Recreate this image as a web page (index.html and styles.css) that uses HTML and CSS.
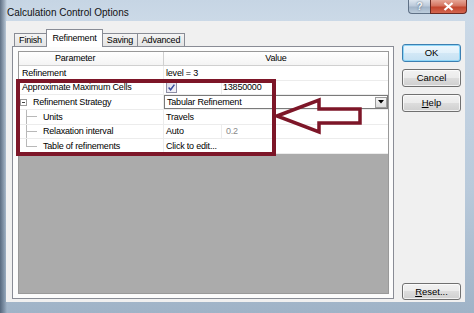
FILE: index.html
```
<!DOCTYPE html>
<html>
<head>
<meta charset="utf-8">
<title>Calculation Control Options</title>
<link rel="stylesheet" href="styles.css">
</head>
<body>
<div class="window">
  <div class="titlebar">
    <span class="title">Calculation Control Options</span>
    <div class="caps">
      <div class="cap cap-help">?</div>
      <div class="cap cap-close"><svg width="11" height="9" viewBox="0 0 11 9"><path d="M1.5 1 L9.5 8 M9.5 1 L1.5 8" stroke="#fff" stroke-width="2.2" fill="none"/></svg></div>
    </div>
  </div>
  <div class="client">
    <div class="main">
      <div class="tabs">
        <div class="tab t-finish">Finish</div>
        <div class="tab tab-sel t-ref">Refinement</div>
        <div class="tab t-sav">Saving</div>
        <div class="tab t-adv">Advanced</div>
      </div>
      <div class="panel">
        <div class="grid">
          <div class="ghead"><div class="hc1">Parameter</div><div class="hc2">Value</div></div>
          <div class="row"><div class="c1">Refinement</div><div class="c2">level = 3</div></div>
          <div class="row"><div class="c1">Approximate Maximum Cells</div><div class="c2 split"><div class="sub"><svg class="check" width="11" height="11" viewBox="0 0 11 11"><defs><linearGradient id="cb" x1="0" y1="0" x2="1" y2="1"><stop offset="0" stop-color="#d9d9e8"/><stop offset="1" stop-color="#f7f7fb"/></linearGradient></defs><rect x="0.5" y="0.5" width="10" height="10" fill="url(#cb)" stroke="#8e8fa6"/><path d="M2.6 5.6 L4.6 7.8 L8.4 2.6" stroke="#3a4d9e" stroke-width="1.5" fill="none"/></svg></div><div class="sub2">13850000</div></div></div>
          <div class="row"><div class="c1 lvl1"><span class="minus"></span>Refinement Strategy</div><div class="c2 combo-cell"><div class="combo"><span class="combo-text">Tabular Refinement</span><span class="drop"><svg width="6" height="4" viewBox="0 0 6 4"><path d="M0 0 H6 L3 3.5 Z" fill="#000"/></svg></span></div></div></div>
          <div class="row"><div class="c1 child"><span class="tree"></span>Units</div><div class="c2">Travels</div></div>
          <div class="row"><div class="c1 child"><span class="tree"></span>Relaxation interval</div><div class="c2 split"><div class="sub">Auto</div><div class="sub2 dim">0.2</div></div></div>
          <div class="row"><div class="c1 child"><span class="tree last"></span>Table of refinements</div><div class="c2">Click to edit...</div></div>
          <div class="gfill"></div>
        </div>
      </div>
    </div>
    <div class="buttons">
      <div class="btn btn-def">OK</div>
      <div class="btn">Cancel</div>
      <div class="btn"><u>H</u>elp</div>
      <div class="btn btn-reset"><u>R</u>eset...</div>
    </div>
  </div>
  <div class="callout"></div>
  <svg class="arrow" width="474" height="313" viewBox="0 0 474 313"><polygon points="277,116 319,100 319,109 360,109 360,123 319,123 319,132" fill="none" stroke="#7d1628" stroke-width="3.5" stroke-linejoin="miter"/></svg>
</div>
</body>
</html>
```
FILE: styles.css
```
html, body {
  margin: 0;
  padding: 0;
}
body {
  width: 474px;
  height: 313px;
  overflow: hidden;
  font-family: "Liberation Sans", Arial, sans-serif;
  font-size: 9px;
  letter-spacing: -0.2px;
  color: #000;
}
.window {
  position: relative;
  width: 474px;
  height: 313px;
  display: flex;
  flex-direction: column;
  background:
    linear-gradient(to right, rgba(60,78,100,0.75) 0, rgba(60,78,100,0.35) 4px, rgba(60,78,100,0) 7px),
    linear-gradient(to bottom, #c6d5e4 0, #cbd9e7 20px, #b9cadb 60%, #9fb3c7 100%);
}
.titlebar {
  height: 21px;
  flex: none;
  display: flex;
  align-items: flex-start;
  justify-content: space-between;
}
.title {
  font-size: 10px;
  letter-spacing: 0;
  line-height: 11px;
  margin: 7px 0 0 7px;
  color: #111;
}
.caps {
  display: flex;
  margin-right: 7px;
}
.cap {
  box-sizing: border-box;
  height: 14px;
}
.cap-help {
  width: 22px;
  border: 1px solid #5f7186;
  border-top: none;
  border-right: none;
  border-radius: 0 0 0 4px;
  background: linear-gradient(#dde6ef 0, #bccadb 45%, #a3b5c9 55%, #bdcddc 100%);
  color: #f4f7fa;
  font-size: 10px;
  font-weight: bold;
  letter-spacing: 0;
  text-align: center;
  line-height: 13px;
  text-shadow: 0 0 2px #3a4f66;
}
.cap-close {
  width: 37px;
  border: 1px solid #6b2a22;
  border-top: none;
  border-radius: 0 0 4px 0;
  background: linear-gradient(#e6a696 0, #d47460 45%, #c2452d 55%, #d4664f 100%);
  display: flex;
  align-items: center;
  justify-content: center;
}
.client {
  flex: none;
  height: 281px;
  margin: 0 9px 0 6px;
  background: #f0f0f0;
  display: flex;
}
.main {
  padding: 8px 0 0 6px;
  width: 382px;
}
.tabs {
  display: flex;
  align-items: flex-end;
  height: 18px;
  margin-left: 2px;
}
.tab {
  box-sizing: border-box;
  height: 13px;
  margin-bottom: 1px;
  margin-left: -1px;
  border: 1px solid #898c95;
  border-bottom: none;
  background: linear-gradient(#f4f4f4, #e4e4e4);
  text-align: center;
  line-height: 12px;
  white-space: nowrap;
}
.t-finish { width: 33px; margin-left: 0; }
.t-ref { width: 57px; }
.t-sav { width: 36px; }
.t-adv { width: 48px; }
.tab-sel {
  position: relative;
  z-index: 1;
  height: 18px;
  margin-bottom: 0;
  background: #fff;
  line-height: 16px;
}
.panel {
  box-sizing: border-box;
  width: 382px;
  height: 253px;
  margin-top: -1px;
  border: 1px solid #898c95;
  background: #fcfcfc;
  padding: 4px 4px 4px 5px;
}
.grid {
  box-sizing: border-box;
  height: 243px;
  border: 1px solid #999;
  display: flex;
  flex-direction: column;
  background: #fff;
}
.ghead {
  flex: none;
  height: 14px;
  box-sizing: border-box;
  border-bottom: 1px solid #d0d0d0;
  display: flex;
  line-height: 13px;
  background: linear-gradient(#ffffff, #f4f4f4);
}
.hc1 {
  width: 145px;
  box-sizing: border-box;
  border-right: 1px solid #d0d0d0;
  padding-left: 36px;
}
.hc2 {
  flex: 1;
  text-align: center;
}
.row {
  flex: none;
  height: 14.667px;
  box-sizing: border-box;
  border-bottom: 1px solid #ececec;
  display: flex;
}
.c1 {
  width: 145px;
  box-sizing: border-box;
  border-right: 1px solid #ececec;
  padding-left: 3px;
  display: flex;
  align-items: center;
  white-space: nowrap;
}
.c2 {
  flex: 1;
  padding-left: 2px;
  display: flex;
  align-items: center;
  white-space: nowrap;
}
.split {
  padding-left: 0;
  align-items: stretch;
}
.sub {
  width: 58px;
  box-sizing: border-box;
  padding-left: 2px;
  border-right: 1px solid #ececec;
  display: flex;
  align-items: center;
}
.sub2 {
  padding-left: 1px;
  display: flex;
  align-items: center;
}
.dim {
  padding-left: 4px;
  color: #8a8a8a;
}
.check {
  display: block;
}
.lvl1 {
  padding-left: 1px;
}
.minus {
  width: 7px;
  height: 7px;
  box-sizing: border-box;
  border: 1px solid #9a9a9a;
  margin-right: 6px;
  background: linear-gradient(#444, #444) center / 3px 1px no-repeat, #fff;
}
.child {
  padding-left: 7px;
}
.tree {
  align-self: stretch;
  width: 11px;
  margin-right: 6px;
  background:
    linear-gradient(#b8b8b8, #b8b8b8) 0 0 / 1px 100% no-repeat,
    linear-gradient(#b8b8b8, #b8b8b8) 0 50% / 11px 1px no-repeat;
}
.tree.last {
  background:
    linear-gradient(#b8b8b8, #b8b8b8) 0 0 / 1px 50% no-repeat,
    linear-gradient(#b8b8b8, #b8b8b8) 0 50% / 11px 1px no-repeat;
}
.combo-cell {
  padding-left: 0;
  align-items: stretch;
}
.combo {
  flex: 1;
  box-sizing: border-box;
  border: 1px solid #7a7a7a;
  display: flex;
  align-items: center;
  padding-left: 2px;
}
.combo-text {
  flex: 1;
}
.drop {
  box-sizing: border-box;
  width: 12px;
  height: 11px;
  margin-right: 0;
  border: 1px solid #9d9d9d;
  background: linear-gradient(#f6f6f6, #dcdcdc);
  display: flex;
  align-items: center;
  justify-content: center;
}
.drop svg {
  display: block;
}
.gfill {
  flex: 1;
  background: #ababab;
}
.buttons {
  box-sizing: border-box;
  width: 59px;
  margin-left: 8px;
  padding: 23px 0 2px;
  display: flex;
  flex-direction: column;
  gap: 7px;
}
.btn {
  box-sizing: border-box;
  height: 18px;
  border: 1px solid #707070;
  border-radius: 3px;
  background: linear-gradient(#f2f2f2 0, #ebebeb 50%, #dddddd 50%, #cfcfcf 100%);
  box-shadow: inset 0 0 0 1px rgba(255,255,255,0.7);
  text-align: center;
  line-height: 16px;
  font-size: 9.5px;
  letter-spacing: 0;
  flex: none;
}
.btn-def {
  border-color: #3c7fb1;
  box-shadow: inset 0 0 0 1px #8fd6f7;
  background: linear-gradient(#eef7fd 0, #e2f1fb 50%, #d3e8f6 50%, #c5e1f3 100%);
}
.btn-reset {
  margin-top: auto;
  height: 17px;
  line-height: 15px;
}
.callout {
  position: absolute;
  left: 16px;
  top: 79px;
  width: 260px;
  height: 77px;
  box-sizing: border-box;
  border: 4px solid #7d1628;
}
.arrow {
  position: absolute;
  left: 0;
  top: 0;
  pointer-events: none;
}
```
